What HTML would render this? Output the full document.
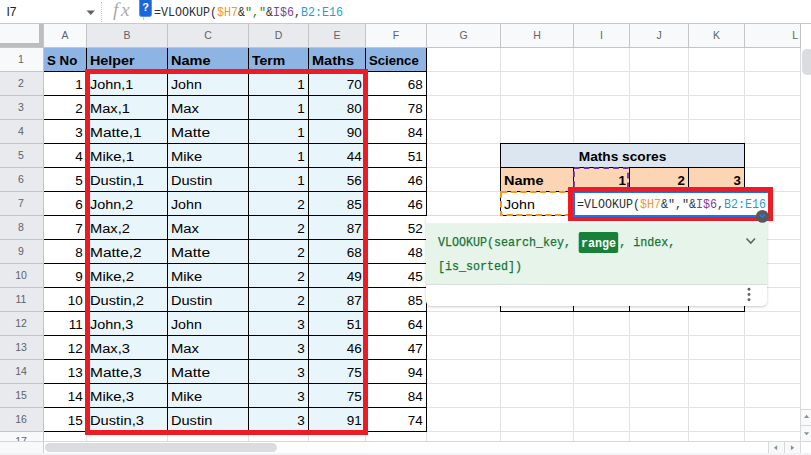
<!DOCTYPE html>
<html><head><meta charset="utf-8"><title>Sheet</title>
<style>
html,body{margin:0;padding:0;}
body{width:811px;height:455px;position:relative;overflow:hidden;background:#fff;font-family:"Liberation Sans",sans-serif;}
.a{position:absolute;}
.ch{position:absolute;top:24px;height:23px;line-height:22px;text-align:center;font-size:10.5px;color:#5f6368;}
.rh{position:absolute;left:0;width:42px;height:23px;line-height:22px;text-align:center;font-size:10.5px;color:#5f6368;}
.c{position:absolute;height:23px;line-height:25px;font-size:14px;color:#000;white-space:nowrap;overflow:hidden;}
.c span{display:inline-block;transform:scaleY(0.93);transform-origin:50% 60%;}
.c.b span{transform:none;}
.t{letter-spacing:0.4px;}
.b.t{letter-spacing:0.2px;}
.r{font-size:13.5px;}
.b{font-weight:bold;font-size:13.3px;}
.r{text-align:right;}
.vl{position:absolute;width:1px;background:#e2e2e2;}
.hl{position:absolute;height:1px;background:#e2e2e2;}
.bk{background:#000;}
.mono{font-family:"Liberation Mono",monospace;font-size:13.6px;transform:scaleX(0.858);transform-origin:0 0;white-space:nowrap;color:#2c2f33;}
</style></head><body>

<div class="vl" style="left:86px;top:48px;height:393px"></div>
<div class="vl" style="left:167px;top:48px;height:393px"></div>
<div class="vl" style="left:248px;top:48px;height:393px"></div>
<div class="vl" style="left:308px;top:48px;height:393px"></div>
<div class="vl" style="left:365px;top:48px;height:393px"></div>
<div class="vl" style="left:426px;top:48px;height:393px"></div>
<div class="vl" style="left:500px;top:48px;height:393px"></div>
<div class="vl" style="left:573px;top:48px;height:393px"></div>
<div class="vl" style="left:629px;top:48px;height:393px"></div>
<div class="vl" style="left:688px;top:48px;height:393px"></div>
<div class="vl" style="left:744px;top:48px;height:393px"></div>
<div class="vl" style="left:800px;top:48px;height:393px"></div>
<div class="hl" style="left:44px;top:71px;width:757px"></div>
<div class="hl" style="left:44px;top:95px;width:757px"></div>
<div class="hl" style="left:44px;top:119px;width:757px"></div>
<div class="hl" style="left:44px;top:143px;width:757px"></div>
<div class="hl" style="left:44px;top:167px;width:757px"></div>
<div class="hl" style="left:44px;top:191px;width:757px"></div>
<div class="hl" style="left:44px;top:215px;width:757px"></div>
<div class="hl" style="left:44px;top:239px;width:757px"></div>
<div class="hl" style="left:44px;top:263px;width:757px"></div>
<div class="hl" style="left:44px;top:287px;width:757px"></div>
<div class="hl" style="left:44px;top:311px;width:757px"></div>
<div class="hl" style="left:44px;top:335px;width:757px"></div>
<div class="hl" style="left:44px;top:359px;width:757px"></div>
<div class="hl" style="left:44px;top:383px;width:757px"></div>
<div class="hl" style="left:44px;top:407px;width:757px"></div>
<div class="hl" style="left:44px;top:431px;width:757px"></div>
<div class="a" style="left:44px;top:48px;width:382px;height:24px;background:#8db4e2"></div>
<div class="a" style="left:87px;top:72px;width:279px;height:360px;background:#e8f5fa"></div>
<div class="a" style="left:501px;top:144px;width:243px;height:24px;background:#dce6f1"></div>
<div class="a" style="left:501px;top:168px;width:243px;height:24px;background:#fcd5b4"></div>
<div class="hl bk" style="left:44px;top:71px;width:383px"></div>
<div class="hl bk" style="left:44px;top:95px;width:383px"></div>
<div class="hl bk" style="left:44px;top:119px;width:383px"></div>
<div class="hl bk" style="left:44px;top:143px;width:383px"></div>
<div class="hl bk" style="left:44px;top:167px;width:383px"></div>
<div class="hl bk" style="left:44px;top:191px;width:383px"></div>
<div class="hl bk" style="left:44px;top:215px;width:383px"></div>
<div class="hl bk" style="left:44px;top:239px;width:383px"></div>
<div class="hl bk" style="left:44px;top:263px;width:383px"></div>
<div class="hl bk" style="left:44px;top:287px;width:383px"></div>
<div class="hl bk" style="left:44px;top:311px;width:383px"></div>
<div class="hl bk" style="left:44px;top:335px;width:383px"></div>
<div class="hl bk" style="left:44px;top:359px;width:383px"></div>
<div class="hl bk" style="left:44px;top:383px;width:383px"></div>
<div class="hl bk" style="left:44px;top:407px;width:383px"></div>
<div class="hl bk" style="left:44px;top:431px;width:383px"></div>
<div class="vl bk" style="left:86px;top:48px;height:384px"></div>
<div class="vl bk" style="left:167px;top:48px;height:384px"></div>
<div class="vl bk" style="left:248px;top:48px;height:384px"></div>
<div class="vl bk" style="left:308px;top:48px;height:384px"></div>
<div class="vl bk" style="left:365px;top:48px;height:384px"></div>
<div class="vl bk" style="left:426px;top:48px;height:384px"></div>
<div class="hl bk" style="left:500px;top:143px;width:245px"></div>
<div class="hl bk" style="left:500px;top:167px;width:245px"></div>
<div class="hl bk" style="left:500px;top:191px;width:245px"></div>
<div class="hl bk" style="left:500px;top:215px;width:245px"></div>
<div class="hl bk" style="left:500px;top:239px;width:245px"></div>
<div class="hl bk" style="left:500px;top:263px;width:245px"></div>
<div class="hl bk" style="left:500px;top:287px;width:245px"></div>
<div class="hl bk" style="left:500px;top:311px;width:245px"></div>
<div class="vl bk" style="left:500px;top:143px;height:169px"></div>
<div class="vl bk" style="left:744px;top:143px;height:169px"></div>
<div class="vl bk" style="left:573px;top:168px;height:144px"></div>
<div class="vl bk" style="left:629px;top:168px;height:144px"></div>
<div class="vl bk" style="left:688px;top:168px;height:144px"></div>
<div class="c b" style="left:47px;top:48px;width:39px"><span style="transform:scale(1.0,1);transform-origin:0 60%">S No</span></div>
<div class="c b" style="left:90px;top:48px;width:77px"><span style="transform:scale(1.08,1);transform-origin:0 60%">Helper</span></div>
<div class="c b" style="left:171px;top:48px;width:77px"><span style="transform:scale(1.09,1);transform-origin:0 60%">Name</span></div>
<div class="c b" style="left:252px;top:48px;width:56px"><span style="transform:scale(1.055,1);transform-origin:0 60%">Term</span></div>
<div class="c b" style="left:312px;top:48px;width:53px"><span style="transform:scale(1.094,1);transform-origin:0 60%">Maths</span></div>
<div class="c b" style="left:369px;top:48px;width:57px"><span style="transform:scale(0.99,1);transform-origin:0 60%">Science</span></div>
<div class="c r" style="left:44px;top:72px;width:38.7px"><span>1</span></div>
<div class="c" style="left:90px;top:72px;width:77px"><span style="transform:scale(1.03,0.93);transform-origin:0 60%">John,1</span></div>
<div class="c" style="left:171px;top:72px;width:77px"><span style="transform:scale(1.016,0.93);transform-origin:0 60%">John</span></div>
<div class="c r" style="left:249px;top:72px;width:55.7px"><span>1</span></div>
<div class="c r" style="left:309px;top:72px;width:52.7px"><span>70</span></div>
<div class="c r" style="left:366px;top:72px;width:56.7px"><span>68</span></div>
<div class="c r" style="left:44px;top:96px;width:38.7px"><span>2</span></div>
<div class="c" style="left:90px;top:96px;width:77px"><span style="transform:scale(1.047,0.93);transform-origin:0 60%">Max,1</span></div>
<div class="c" style="left:171px;top:96px;width:77px"><span style="transform:scale(1.057,0.93);transform-origin:0 60%">Max</span></div>
<div class="c r" style="left:249px;top:96px;width:55.7px"><span>1</span></div>
<div class="c r" style="left:309px;top:96px;width:52.7px"><span>80</span></div>
<div class="c r" style="left:366px;top:96px;width:56.7px"><span>78</span></div>
<div class="c r" style="left:44px;top:120px;width:38.7px"><span>3</span></div>
<div class="c" style="left:90px;top:120px;width:77px"><span style="transform:scale(1.107,0.93);transform-origin:0 60%">Matte,1</span></div>
<div class="c" style="left:171px;top:120px;width:77px"><span style="transform:scale(1.117,0.93);transform-origin:0 60%">Matte</span></div>
<div class="c r" style="left:249px;top:120px;width:55.7px"><span>1</span></div>
<div class="c r" style="left:309px;top:120px;width:52.7px"><span>90</span></div>
<div class="c r" style="left:366px;top:120px;width:56.7px"><span>84</span></div>
<div class="c r" style="left:44px;top:144px;width:38.7px"><span>4</span></div>
<div class="c" style="left:90px;top:144px;width:77px"><span style="transform:scale(1.066,0.93);transform-origin:0 60%">Mike,1</span></div>
<div class="c" style="left:171px;top:144px;width:77px"><span style="transform:scale(1.057,0.93);transform-origin:0 60%">Mike</span></div>
<div class="c r" style="left:249px;top:144px;width:55.7px"><span>1</span></div>
<div class="c r" style="left:309px;top:144px;width:52.7px"><span>44</span></div>
<div class="c r" style="left:366px;top:144px;width:56.7px"><span>51</span></div>
<div class="c r" style="left:44px;top:168px;width:38.7px"><span>5</span></div>
<div class="c" style="left:90px;top:168px;width:77px"><span style="transform:scale(1.049,0.93);transform-origin:0 60%">Dustin,1</span></div>
<div class="c" style="left:171px;top:168px;width:77px"><span style="transform:scale(1.04,0.93);transform-origin:0 60%">Dustin</span></div>
<div class="c r" style="left:249px;top:168px;width:55.7px"><span>1</span></div>
<div class="c r" style="left:309px;top:168px;width:52.7px"><span>56</span></div>
<div class="c r" style="left:366px;top:168px;width:56.7px"><span>46</span></div>
<div class="c r" style="left:44px;top:192px;width:38.7px"><span>6</span></div>
<div class="c" style="left:90px;top:192px;width:77px"><span style="transform:scale(1.03,0.93);transform-origin:0 60%">John,2</span></div>
<div class="c" style="left:171px;top:192px;width:77px"><span style="transform:scale(1.016,0.93);transform-origin:0 60%">John</span></div>
<div class="c r" style="left:249px;top:192px;width:55.7px"><span>2</span></div>
<div class="c r" style="left:309px;top:192px;width:52.7px"><span>85</span></div>
<div class="c r" style="left:366px;top:192px;width:56.7px"><span>46</span></div>
<div class="c r" style="left:44px;top:216px;width:38.7px"><span>7</span></div>
<div class="c" style="left:90px;top:216px;width:77px"><span style="transform:scale(1.047,0.93);transform-origin:0 60%">Max,2</span></div>
<div class="c" style="left:171px;top:216px;width:77px"><span style="transform:scale(1.057,0.93);transform-origin:0 60%">Max</span></div>
<div class="c r" style="left:249px;top:216px;width:55.7px"><span>2</span></div>
<div class="c r" style="left:309px;top:216px;width:52.7px"><span>87</span></div>
<div class="c r" style="left:366px;top:216px;width:56.7px"><span>52</span></div>
<div class="c r" style="left:44px;top:240px;width:38.7px"><span>8</span></div>
<div class="c" style="left:90px;top:240px;width:77px"><span style="transform:scale(1.107,0.93);transform-origin:0 60%">Matte,2</span></div>
<div class="c" style="left:171px;top:240px;width:77px"><span style="transform:scale(1.117,0.93);transform-origin:0 60%">Matte</span></div>
<div class="c r" style="left:249px;top:240px;width:55.7px"><span>2</span></div>
<div class="c r" style="left:309px;top:240px;width:52.7px"><span>68</span></div>
<div class="c r" style="left:366px;top:240px;width:56.7px"><span>48</span></div>
<div class="c r" style="left:44px;top:264px;width:38.7px"><span>9</span></div>
<div class="c" style="left:90px;top:264px;width:77px"><span style="transform:scale(1.066,0.93);transform-origin:0 60%">Mike,2</span></div>
<div class="c" style="left:171px;top:264px;width:77px"><span style="transform:scale(1.057,0.93);transform-origin:0 60%">Mike</span></div>
<div class="c r" style="left:249px;top:264px;width:55.7px"><span>2</span></div>
<div class="c r" style="left:309px;top:264px;width:52.7px"><span>49</span></div>
<div class="c r" style="left:366px;top:264px;width:56.7px"><span>45</span></div>
<div class="c r" style="left:44px;top:288px;width:38.7px"><span>10</span></div>
<div class="c" style="left:90px;top:288px;width:77px"><span style="transform:scale(1.049,0.93);transform-origin:0 60%">Dustin,2</span></div>
<div class="c" style="left:171px;top:288px;width:77px"><span style="transform:scale(1.04,0.93);transform-origin:0 60%">Dustin</span></div>
<div class="c r" style="left:249px;top:288px;width:55.7px"><span>2</span></div>
<div class="c r" style="left:309px;top:288px;width:52.7px"><span>87</span></div>
<div class="c r" style="left:366px;top:288px;width:56.7px"><span>85</span></div>
<div class="c r" style="left:44px;top:312px;width:38.7px"><span>11</span></div>
<div class="c" style="left:90px;top:312px;width:77px"><span style="transform:scale(1.03,0.93);transform-origin:0 60%">John,3</span></div>
<div class="c" style="left:171px;top:312px;width:77px"><span style="transform:scale(1.016,0.93);transform-origin:0 60%">John</span></div>
<div class="c r" style="left:249px;top:312px;width:55.7px"><span>3</span></div>
<div class="c r" style="left:309px;top:312px;width:52.7px"><span>51</span></div>
<div class="c r" style="left:366px;top:312px;width:56.7px"><span>64</span></div>
<div class="c r" style="left:44px;top:336px;width:38.7px"><span>12</span></div>
<div class="c" style="left:90px;top:336px;width:77px"><span style="transform:scale(1.047,0.93);transform-origin:0 60%">Max,3</span></div>
<div class="c" style="left:171px;top:336px;width:77px"><span style="transform:scale(1.057,0.93);transform-origin:0 60%">Max</span></div>
<div class="c r" style="left:249px;top:336px;width:55.7px"><span>3</span></div>
<div class="c r" style="left:309px;top:336px;width:52.7px"><span>46</span></div>
<div class="c r" style="left:366px;top:336px;width:56.7px"><span>47</span></div>
<div class="c r" style="left:44px;top:360px;width:38.7px"><span>13</span></div>
<div class="c" style="left:90px;top:360px;width:77px"><span style="transform:scale(1.107,0.93);transform-origin:0 60%">Matte,3</span></div>
<div class="c" style="left:171px;top:360px;width:77px"><span style="transform:scale(1.117,0.93);transform-origin:0 60%">Matte</span></div>
<div class="c r" style="left:249px;top:360px;width:55.7px"><span>3</span></div>
<div class="c r" style="left:309px;top:360px;width:52.7px"><span>75</span></div>
<div class="c r" style="left:366px;top:360px;width:56.7px"><span>94</span></div>
<div class="c r" style="left:44px;top:384px;width:38.7px"><span>14</span></div>
<div class="c" style="left:90px;top:384px;width:77px"><span style="transform:scale(1.066,0.93);transform-origin:0 60%">Mike,3</span></div>
<div class="c" style="left:171px;top:384px;width:77px"><span style="transform:scale(1.057,0.93);transform-origin:0 60%">Mike</span></div>
<div class="c r" style="left:249px;top:384px;width:55.7px"><span>3</span></div>
<div class="c r" style="left:309px;top:384px;width:52.7px"><span>75</span></div>
<div class="c r" style="left:366px;top:384px;width:56.7px"><span>84</span></div>
<div class="c r" style="left:44px;top:408px;width:38.7px"><span>15</span></div>
<div class="c" style="left:90px;top:408px;width:77px"><span style="transform:scale(1.049,0.93);transform-origin:0 60%">Dustin,3</span></div>
<div class="c" style="left:171px;top:408px;width:77px"><span style="transform:scale(1.04,0.93);transform-origin:0 60%">Dustin</span></div>
<div class="c r" style="left:249px;top:408px;width:55.7px"><span>3</span></div>
<div class="c r" style="left:309px;top:408px;width:52.7px"><span>91</span></div>
<div class="c r" style="left:366px;top:408px;width:56.7px"><span>74</span></div>
<div class="c b" style="left:501px;top:144px;width:243px;text-align:center"><span style="transform:scaleX(1.03)">Maths scores</span></div>
<div class="c b" style="left:504px;top:168px;width:66px"><span style="transform:scaleX(1.09);transform-origin:0 60%">Name</span></div>
<div class="c b r" style="left:574px;top:168px;width:52px"><span>1</span></div>
<div class="c b r" style="left:630px;top:168px;width:55px"><span>2</span></div>
<div class="c b r" style="left:689px;top:168px;width:52px"><span>3</span></div>
<div class="c" style="left:504px;top:192px;width:66px"><span style="transform:scale(1.016,0.93);transform-origin:0 60%">John</span></div>
<svg class="a" style="left:0;top:0" width="811" height="455"><rect x="574" y="168" width="54" height="24" fill="none" stroke="#7332a3" stroke-width="1.8" stroke-dasharray="5.6 4.2"/><rect x="501" y="192" width="72" height="23" fill="none" stroke="#f7981d" stroke-width="2" stroke-dasharray="6.3 3.4"/></svg>
<div class="a" style="left:85px;top:69px;width:283px;height:366px;border:5px solid #ed1c24;box-sizing:border-box"></div>
<div class="a" style="left:0;top:23px;width:811px;height:25px;background:#f8f9fa"></div>
<div class="a" style="left:87px;top:24px;width:278px;height:24px;background:#e8eaed"></div>
<div class="a" style="left:0;top:48px;width:43px;height:393px;background:#f8f9fa"></div>
<div class="a" style="left:0;top:72px;width:43px;height:359px;background:#e8eaed"></div>
<div class="hl" style="left:0;top:23px;width:811px;background:#c9c9c9"></div>
<div class="hl" style="left:0;top:47px;width:801px;background:#c4c4c4"></div>
<div class="vl" style="left:43px;top:24px;height:24px;background:#c4c4c4"></div>
<div class="vl" style="left:86px;top:24px;height:24px;background:#c4c4c4"></div>
<div class="vl" style="left:167px;top:24px;height:24px;background:#c4c4c4"></div>
<div class="vl" style="left:248px;top:24px;height:24px;background:#c4c4c4"></div>
<div class="vl" style="left:308px;top:24px;height:24px;background:#c4c4c4"></div>
<div class="vl" style="left:365px;top:24px;height:24px;background:#c4c4c4"></div>
<div class="vl" style="left:426px;top:24px;height:24px;background:#c4c4c4"></div>
<div class="vl" style="left:500px;top:24px;height:24px;background:#c4c4c4"></div>
<div class="vl" style="left:573px;top:24px;height:24px;background:#c4c4c4"></div>
<div class="vl" style="left:629px;top:24px;height:24px;background:#c4c4c4"></div>
<div class="vl" style="left:688px;top:24px;height:24px;background:#c4c4c4"></div>
<div class="vl" style="left:744px;top:24px;height:24px;background:#c4c4c4"></div>
<div class="vl" style="left:800px;top:24px;height:24px;background:#c4c4c4"></div>
<div class="vl" style="left:43px;top:48px;height:393px;background:#c4c4c4"></div>
<div class="hl" style="left:0;top:71px;width:43px;background:#c4c4c4"></div>
<div class="hl" style="left:0;top:95px;width:43px;background:#c4c4c4"></div>
<div class="hl" style="left:0;top:119px;width:43px;background:#c4c4c4"></div>
<div class="hl" style="left:0;top:143px;width:43px;background:#c4c4c4"></div>
<div class="hl" style="left:0;top:167px;width:43px;background:#c4c4c4"></div>
<div class="hl" style="left:0;top:191px;width:43px;background:#c4c4c4"></div>
<div class="hl" style="left:0;top:215px;width:43px;background:#c4c4c4"></div>
<div class="hl" style="left:0;top:239px;width:43px;background:#c4c4c4"></div>
<div class="hl" style="left:0;top:263px;width:43px;background:#c4c4c4"></div>
<div class="hl" style="left:0;top:287px;width:43px;background:#c4c4c4"></div>
<div class="hl" style="left:0;top:311px;width:43px;background:#c4c4c4"></div>
<div class="hl" style="left:0;top:335px;width:43px;background:#c4c4c4"></div>
<div class="hl" style="left:0;top:359px;width:43px;background:#c4c4c4"></div>
<div class="hl" style="left:0;top:383px;width:43px;background:#c4c4c4"></div>
<div class="hl" style="left:0;top:407px;width:43px;background:#c4c4c4"></div>
<div class="hl" style="left:0;top:431px;width:43px;background:#c4c4c4"></div>
<div class="ch" style="left:44px;width:42px">A</div>
<div class="ch" style="left:87px;width:80px">B</div>
<div class="ch" style="left:168px;width:80px">C</div>
<div class="ch" style="left:249px;width:59px">D</div>
<div class="ch" style="left:309px;width:56px">E</div>
<div class="ch" style="left:366px;width:60px">F</div>
<div class="ch" style="left:427px;width:73px">G</div>
<div class="ch" style="left:501px;width:72px">H</div>
<div class="ch" style="left:574px;width:55px">I</div>
<div class="ch" style="left:630px;width:58px">J</div>
<div class="ch" style="left:689px;width:55px">K</div>
<div class="ch" style="left:745px;width:53px;text-align:right">L</div>
<div class="rh" style="top:48px">1</div>
<div class="rh" style="top:72px">2</div>
<div class="rh" style="top:96px">3</div>
<div class="rh" style="top:120px">4</div>
<div class="rh" style="top:144px">5</div>
<div class="rh" style="top:168px">6</div>
<div class="rh" style="top:192px">7</div>
<div class="rh" style="top:216px">8</div>
<div class="rh" style="top:240px">9</div>
<div class="rh" style="top:264px">10</div>
<div class="rh" style="top:288px">11</div>
<div class="rh" style="top:312px">12</div>
<div class="rh" style="top:336px">13</div>
<div class="rh" style="top:360px">14</div>
<div class="rh" style="top:384px">15</div>
<div class="rh" style="top:408px">16</div>
<div class="rh" style="top:430px">17</div>
<div class="a" style="left:0;top:24px;width:39px;height:19px;background:#f8f9fa;border-right:4px solid #bdbdbd;border-bottom:4px solid #bdbdbd"></div>
<div class="a" style="left:801px;top:24px;width:10px;height:431px;background:#fff"></div>
<div class="a" style="left:802px;top:49px;width:12px;height:26px;border-radius:5px;background:#dadce0"></div>
<div class="a" style="left:801px;top:410px;width:10px;height:31px;background:#f8f9fa"></div>
<div class="hl" style="left:801px;top:409px;width:10px;background:#d9d9d9"></div>
<div class="hl" style="left:801px;top:425px;width:10px;background:#d9d9d9"></div>
<div class="a" style="left:0;top:441px;width:811px;height:14px;background:#fff"></div>
<div class="a" style="left:769px;top:442px;width:31px;height:11px;background:#f8f9fa"></div>
<div class="hl" style="left:0;top:441px;width:811px;background:#d9d9d9"></div>
<div class="vl" style="left:800px;top:48px;height:405px;background:#d9d9d9"></div>
<div class="a" style="left:0;top:442px;width:43px;height:11px;background:#f8f9fa"></div>
<div class="vl" style="left:43px;top:441px;height:12px;background:#d0d0d0"></div>
<div class="a" style="left:45px;top:443px;width:232px;height:9px;border-radius:5px;background:#dadce0"></div>
<div class="vl" style="left:768px;top:442px;height:11px;background:#d9d9d9"></div>
<div class="vl" style="left:784px;top:442px;height:11px;background:#d9d9d9"></div>
<div class="a" style="left:0;top:453px;width:811px;height:2px;background:#f1f3f4"></div>
<svg class="a" style="left:0;top:0" width="811" height="455">
<polygon points="804,418 809.2,418 806.6,414.8" fill="#8a9392"/>
<polygon points="804,432.2 809.2,432.2 806.6,435.2" fill="#8a9392"/>
<polygon points="777.2,445.2 777.2,450.2 773.9,447.7" fill="#8a9392"/>
<polygon points="790.9,445.2 790.9,450.2 794.2,447.7" fill="#8a9392"/>
</svg>
<div class="a" style="left:0;top:0;width:811px;height:23px;background:#fff"></div>
<div class="a" style="left:6.5px;top:5px;font-size:12px;line-height:15px;color:#202124">I7</div>
<svg class="a" style="left:86px;top:10px" width="10" height="6"><polygon points="0.5,0.5 9,0.5 4.75,5" fill="#5f6368"/></svg>
<div class="a" style="left:101px;top:2px;height:20px;width:0;border-left:1px dotted #c8c8c8"></div>
<div class="a" style="left:113px;top:0px;font-family:'Liberation Serif',serif;font-style:italic;font-size:19.5px;letter-spacing:2.6px;line-height:20px;color:#ababab">fx</div>
<div class="a" style="left:139px;top:-1px;width:13px;height:18px;background:#1a66dc;border:1.3px solid #5b8def;box-sizing:border-box;border-radius:0 0 2.5px 2.5px;color:#fff;font-weight:bold;font-size:11px;line-height:15.5px;text-align:center">?</div>
<div class="vl" style="left:143px;top:17px;height:3px;background:#c3cad6"></div>
<div class="a mono" style="left:153.5px;top:4.5px;line-height:16px">=VLOOKUP(<span style="color:#f7981d">$H7</span>&amp;<span style="color:#188038">&quot;,&quot;</span>&amp;<span style="color:#7e3f98">I$6</span>,<span style="color:#1f9fd0">B2:E16</span></div>
<div class="a" style="left:426px;top:215.5px;width:340.6px;height:90.3px;background:#fff;border-radius:0 0 5px 5px;box-shadow:0 1px 3px rgba(0,0,0,.22)"></div>
<div class="a" style="left:426px;top:223px;width:340.6px;height:61px;background:#e6f4ea"></div>
<div class="hl" style="left:426px;top:284px;width:340.6px;background:#dadce0"></div>
<div class="a mono" style="left:438px;top:231px;line-height:23.5px;color:#137333;-webkit-text-stroke:0.25px #137333">VLOOKUP(search_key, <span style="background:#188038;color:#fff;font-weight:bold;border-radius:2px;padding:3.5px 2.4px 2.5px 2.4px;margin:0 1.2px 0 1.2px;-webkit-text-stroke:0">range</span>, index,<br>[is_sorted])</div>
<svg class="a" style="left:744px;top:235px" width="14" height="12"><polyline points="2.5,3.5 6.8,8 11,3.5" fill="none" stroke="#5f6368" stroke-width="1.6"/></svg>
<svg class="a" style="left:745px;top:286px" width="8" height="18"><circle cx="4" cy="3.2" r="1.45" fill="#5f6368"/><circle cx="4" cy="8.5" r="1.45" fill="#5f6368"/><circle cx="4" cy="13.8" r="1.45" fill="#5f6368"/></svg>
<div class="a" style="left:573px;top:192px;width:199px;height:25px;background:#fff;border:2px solid #1a73e8;border-top-width:1.3px;border-bottom-width:2.4px;box-sizing:border-box"></div>
<div class="a mono" style="left:576.5px;top:197px;line-height:16px">=VLOOKUP(<span style="color:#f7981d">$H7</span>&amp;<span style="color:#2c2f33">&quot;,&quot;</span>&amp;<span style="color:#7e3f98">I$6</span>,<span style="color:#1f9fd0">B2:E16</span></div>
<div class="a" style="left:568px;top:187px;width:205px;height:34px;border:5px solid #ed1c24;border-width:5px 5px 4.5px 5px;box-sizing:border-box"></div>
<svg class="a" style="left:755px;top:208.6px" width="15" height="15"><circle cx="7.4" cy="7.4" r="6.4" fill="#55585c"/><polyline points="4.6,5.6 7.3,8 10,5.6" fill="none" stroke="#2a7af0" stroke-width="1.6"/></svg>
</body></html>
